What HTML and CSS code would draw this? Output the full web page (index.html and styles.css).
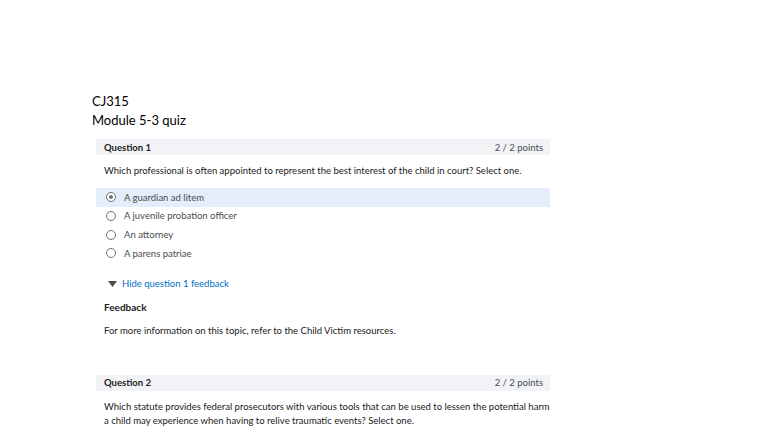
FILE: index.html
```html
<!DOCTYPE html>
<html>
<head>
<meta charset="utf-8">
<link rel="stylesheet" href="styles.css">
</head>
<body>
<div class="page">
  <div class="title">
    <div class="title-line">CJ315</div>
    <div class="title-line">Module 5-3 quiz</div>
  </div>
  <div class="quiz">
    <section class="question">
      <div class="q-head"><span class="q-name">Question 1</span><span class="q-points">2 / 2 points</span></div>
      <p class="q-text">Which professional is often appointed to represent the best interest of the child in court? Select one.</p>
      <ul class="options">
        <li class="option selected"><span class="radio checked"></span><span>A guardian ad litem</span></li>
        <li class="option"><span class="radio"></span><span>A juvenile probation officer</span></li>
        <li class="option"><span class="radio"></span><span>An attorney</span></li>
        <li class="option"><span class="radio"></span><span>A parens patriae</span></li>
      </ul>
      <div class="toggle"><svg class="caret" width="9" height="6" viewBox="0 0 9 6"><path d="M0 0H9L4.5 6Z" fill="#494c4e"/></svg><span class="link">Hide question 1 feedback</span></div>
      <div class="fb-title">Feedback</div>
      <p class="fb-text">For more information on this topic, refer to the Child Victim resources.</p>
    </section>
    <section class="question q2">
      <div class="q-head"><span class="q-name">Question 2</span><span class="q-points">2 / 2 points</span></div>
      <p class="q-text">Which statute provides federal prosecutors with various tools that can be used to lessen the potential harm a child may experience when having to relive traumatic events? Select one.</p>
    </section>
  </div>
</div>
</body>
</html>
```

FILE: styles.css
```css
html, body {
  margin: 0;
  padding: 0;
  background: #ffffff;
}
body {
  font-family: Lato, "Liberation Sans", sans-serif;
  color: #202122;
}
.page {
  padding-top: 92px;
  padding-left: 92px;
  width: 460px;
}
.title-line {
  font-size: 13px;
  line-height: 19px;
  color: #000;
}
.quiz {
  margin-top: 9px;
  margin-left: 4px;
  width: 454px;
}
.q-head {
  display: flex;
  justify-content: space-between;
  align-items: center;
  background: #f1f3f6;
  height: 16px;
  padding: 0 7px 0 8px;
  font-size: 9.5px;
}
.q-name {
  font-weight: 700;
  color: #202122;
}
.q-points {
  color: #494c4e;
}
.q-text {
  margin: 0;
  padding: 9px 0 0 8px;
  font-size: 9.5px;
  line-height: 14px;
  color: #202122;
}
.options {
  list-style: none;
  margin: 10px 0 0 0;
  padding: 0;
}
.option {
  display: flex;
  align-items: center;
  height: 18.67px;
  padding-left: 10px;
  font-size: 9.5px;
  color: #494c4e;
}
.option.selected {
  background: #e3eefa;
}
.radio {
  width: 8px;
  height: 8px;
  border: 1px solid #6e7376;
  border-radius: 50%;
  margin-right: 8px;
  display: inline-flex;
  align-items: center;
  justify-content: center;
  background: #fff;
}
.radio.checked::after {
  content: "";
  width: 4px;
  height: 4px;
  border-radius: 50%;
  background: #6e7376;
}
.toggle {
  display: flex;
  align-items: center;
  margin-top: 14px;
  padding-left: 12px;
  height: 14px;
  font-size: 9.5px;
}
.caret {
  margin-right: 5px;
}
.link {
  color: #006fbf;
}
.fb-title {
  margin-top: 9px;
  padding-left: 8px;
  font-size: 10px;
  font-weight: 700;
  line-height: 14px;
  color: #202122;
}
.fb-text {
  margin: 10px 0 0 0;
  padding-left: 8px;
  font-size: 9.5px;
  line-height: 14px;
  color: #202122;
}
.q2 {
  margin-top: 37px;
}
```
